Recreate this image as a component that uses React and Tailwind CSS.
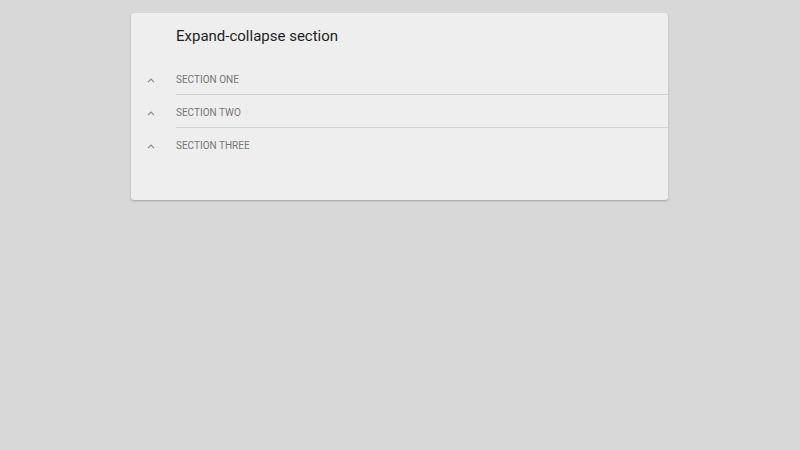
import React from "react";

function Chevron() {
  return (
    <svg width="8" height="5" viewBox="0 0 8 5" fill="none" className="block">
      <path d="M1 4.2 L4 1.2 L7 4.2" stroke="#8a8a8a" strokeWidth="1.2" />
    </svg>
  );
}

function Row({ label, last }) {
  return (
    <div className="flex h-[33px]">
      <div className="w-[45px] flex items-center justify-center pr-[6px] pt-[4px]">
        <Chevron />
      </div>
      <div
        className={
          "flex-1 flex items-center pt-[3px] text-[10px] text-[#767676] border-b " +
          (last ? "border-transparent" : "border-[#d2d2d2]")
        }
      >
        {label}
      </div>
    </div>
  );
}

export default function App() {
  return (
    <div
      className="w-[800px] h-[450px] bg-[#d8d8d8] pt-[13px]"
      style={{ fontFamily: "Roboto, 'Noto Sans', sans-serif" }}
    >
      <div className="ml-[131px] w-[537px] h-[187px] bg-[#eeeeee] rounded-[3px] shadow-[0_1px_2px_rgba(0,0,0,0.25)]">
        <div className="pl-[45px] pt-[12px] h-[49px] text-[15px] leading-[22px] text-[#1e1e1e]">
          Expand-collapse section
        </div>
        <div>
          <Row label="SECTION ONE" />
          <Row label="SECTION TWO" />
          <Row label="SECTION THREE" last />
        </div>
      </div>
    </div>
  );
}
